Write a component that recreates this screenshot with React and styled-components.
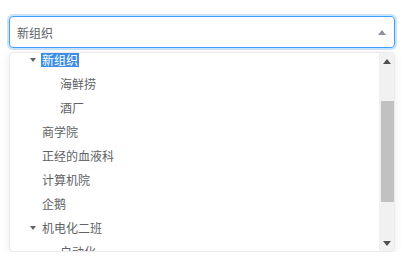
import { useLayoutEffect, useRef } from 'react';
import styled, { createGlobalStyle } from 'styled-components';

const GlobalStyle = createGlobalStyle`
  body {
    margin: 0;
    background: #ffffff;
    font-family: "Noto Sans CJK SC", "Noto Sans", sans-serif;
  }
`

const Page = styled.div`
  width: 386px;
  padding: 16px 0 0 9px;
`

const SelectBox = styled.div`
  box-sizing: border-box;
  height: 32px;
  display: flex;
  align-items: center;
  justify-content: space-between;
  padding: 0 8px 0 7px;
  border: 1px solid #409eff;
  border-radius: 4px;
  box-shadow: 0 0 0 2px rgba(64, 158, 255, 0.28);
  font-size: 12px;
  color: #606266;
`

const Arrow = styled.span`
  width: 0;
  height: 0;
  border-left: 4.5px solid transparent;
  border-right: 4.5px solid transparent;
  border-bottom: 5px solid ${p => p.color || '#909399'};
  transform: ${p => (p.down ? 'rotate(180deg)' : 'none')};
`

const Dropdown = styled.div`
  box-sizing: border-box;
  height: 200px;
  margin-top: 4px;
  display: flex;
  background: #ffffff;
  border: 1px solid #e9ebef;
  border-radius: 4px;
  box-shadow: 0 2px 10px rgba(0, 0, 0, 0.08);
  overflow: hidden;
`

const TreeScroller = styled.div`
  flex: 1;
  overflow: hidden;
`

const Row = styled.div`
  height: 24px;
  display: flex;
  align-items: center;
  padding-left: ${p => 14 + (p.level - 1) * 18}px;
  font-size: 12px;
  color: #606266;
`

const CaretSlot = styled.span`
  width: 18px;
  height: 24px;
  display: flex;
  align-items: center;
  justify-content: center;
`

const Caret = styled.span`
  width: 0;
  height: 0;
  border-left: 3.5px solid transparent;
  border-right: 3.5px solid transparent;
  border-top: 4px solid #606266;
`

const Label = styled.span`
  display: inline-block;
  height: 14px;
  line-height: 14px;
  padding: 0 1px;
  margin-left: -1px;
  background: ${p => (p.selected ? '#3b8de8' : 'transparent')};
  color: ${p => (p.selected ? '#ffffff' : 'inherit')};
`

const Scrollbar = styled.div`
  width: 15px;
  display: flex;
  flex-direction: column;
  background: #f1f1f1;
`

const ScrollButton = styled.div`
  box-sizing: border-box;
  height: 17px;
  display: flex;
  justify-content: center;
  align-items: ${p => (p.down ? 'flex-start' : 'flex-end')};
  padding-top: ${p => (p.down ? '7px' : '0')};
  padding-bottom: ${p => (p.down ? '0' : '6px')};
`

const Track = styled.div`
  flex: 1;
  padding-top: 31px;
`

const Thumb = styled.div`
  height: 101px;
  margin-left: 2px;
  background: #c1c1c1;
`

const tree = [
  {
    label: '新组织',
    selected: true,
    children: [{ label: '海鲜捞' }, { label: '酒厂' }],
  },
  { label: '商学院' },
  { label: '正经的血液科' },
  { label: '计算机院' },
  { label: '企鹅' },
  {
    label: '机电化二班',
    children: [{ label: '自动化' }],
  },
]

function TreeRows({ nodes, level }) {
  return nodes.map(node => (
    <div key={node.label}>
      <Row level={level}>
        <CaretSlot>{node.children && <Caret />}</CaretSlot>
        <Label selected={node.selected}>{node.label}</Label>
      </Row>
      {node.children && <TreeRows nodes={node.children} level={level + 1} />}
    </div>
  ))
}

export default function App() {
  const scroller = useRef(null)

  useLayoutEffect(() => {
    if (scroller.current) scroller.current.scrollTop = 5
  }, [])

  return (
    <Page>
      <GlobalStyle />
      <SelectBox>
        <span>新组织</span>
        <Arrow />
      </SelectBox>
      <Dropdown>
        <TreeScroller ref={scroller}>
          <TreeRows nodes={tree} level={1} />
        </TreeScroller>
        <Scrollbar>
          <ScrollButton>
            <Arrow color="#505050" />
          </ScrollButton>
          <Track>
            <Thumb />
          </Track>
          <ScrollButton down>
            <Arrow color="#505050" down />
          </ScrollButton>
        </Scrollbar>
      </Dropdown>
    </Page>
  )
}
